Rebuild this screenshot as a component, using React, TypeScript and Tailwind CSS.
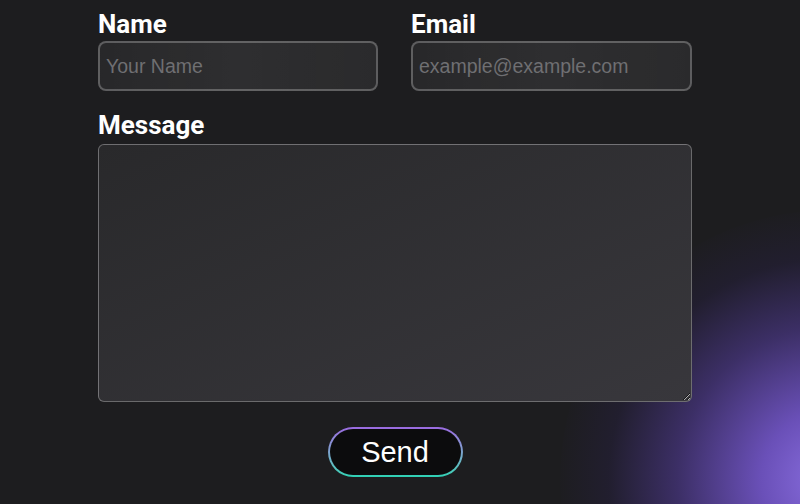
import React from "react";

export default function App() {
  return (
    <div className="relative w-[800px] h-[504px] overflow-hidden bg-[#1d1d1f]" style={{ fontFamily: "Roboto, 'Liberation Sans', sans-serif" }}>
      <div className="pointer-events-none absolute left-[560px] top-[210px] w-[540px] h-[540px] rounded-full bg-[radial-gradient(circle_at_center,#8a6fe0_0%,#6a50b8_18%,#3c2f66_40%,rgba(40,32,70,0.4)_58%,rgba(29,29,31,0)_72%)]" />
      <div className="relative w-[594px] ml-[98px] pt-[10px] flex flex-col">
        <div className="flex gap-[33px]">
          <div className="flex flex-col w-[280px]">
            <label className="text-white font-bold text-[26px] leading-[28px] mb-[3px]">Name</label>
            <input
              placeholder="Your Name"
              className="h-[50px] rounded-[8px] border-2 border-white/25 bg-gradient-to-r from-white/[0.05] via-white/[0.08] to-white/[0.06] pl-[6px] text-[19.5px] text-white placeholder:text-[#6f6f72] outline-none"
              style={{ fontFamily: "'Liberation Sans', Arial, sans-serif" }}
            />
          </div>
          <div className="flex flex-col w-[281px]">
            <label className="text-white font-bold text-[26px] leading-[28px] mb-[3px]">Email</label>
            <input
              placeholder="example@example.com"
              className="h-[50px] rounded-[8px] border-2 border-white/25 bg-gradient-to-r from-white/[0.05] via-white/[0.08] to-white/[0.06] pl-[6px] text-[19.5px] text-white placeholder:text-[#6f6f72] outline-none"
              style={{ fontFamily: "'Liberation Sans', Arial, sans-serif" }}
            />
          </div>
        </div>
        <label className="text-white font-bold text-[26px] leading-[28px] mt-[20px] mb-[5px]">Message</label>
        <textarea
          className="h-[258px] rounded-[6px] border border-white/30 bg-gradient-to-br from-[#29292b] to-[#38373c] text-white outline-none"
        />
        <div className="flex justify-center mt-[25px]">
          <div className="w-[135px] h-[50px] rounded-full p-[2px] bg-gradient-to-b from-[#9a6ae0] to-[#2ad2b4]">
            <button
              className="w-full h-full rounded-full bg-[#0c0c0d] text-white text-[29px] leading-none"
              style={{ fontFamily: "'Liberation Sans', Arial, sans-serif" }}
            >
              Send
            </button>
          </div>
        </div>
      </div>
    </div>
  );
}
